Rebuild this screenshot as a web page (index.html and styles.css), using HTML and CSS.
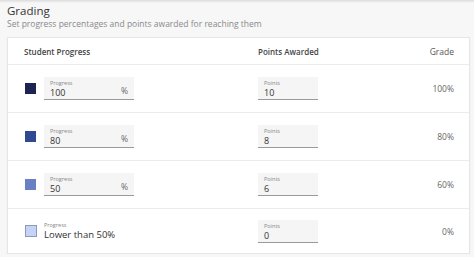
FILE: index.html
```html
<!DOCTYPE html>
<html lang="en">
<head>
    <meta charset="UTF-8">
    <meta name="viewport" content="width=device-width, initial-scale=1.0">
    <title>Grading</title>
    <link rel="stylesheet" href="styles.css">
</head>
<body>
    <div class="top-shade"></div>
    <div class="page">
        <h1>Grading</h1>
        <p class="subtitle">Set progress percentages and points awarded for reaching them</p>

        <div class="card">
            <div class="row head">
                <div>Student Progress</div>
                <div>Points Awarded</div>
                <div class="grade">Grade</div>
            </div>

            <div class="row">
                <div class="progress-cell">
                    <span class="swatch c1"></span>
                    <div class="field wide">
                        <span class="field-label">Progress</span>
                        <span class="field-value">100</span>
                        <span class="unit">%</span>
                    </div>
                </div>
                <div>
                    <div class="field narrow">
                        <span class="field-label">Points</span>
                        <span class="field-value">10</span>
                    </div>
                </div>
                <div class="grade">100%</div>
            </div>

            <div class="row">
                <div class="progress-cell">
                    <span class="swatch c2"></span>
                    <div class="field wide">
                        <span class="field-label">Progress</span>
                        <span class="field-value">80</span>
                        <span class="unit">%</span>
                    </div>
                </div>
                <div>
                    <div class="field narrow">
                        <span class="field-label">Points</span>
                        <span class="field-value">8</span>
                    </div>
                </div>
                <div class="grade">80%</div>
            </div>

            <div class="row">
                <div class="progress-cell">
                    <span class="swatch c3"></span>
                    <div class="field wide">
                        <span class="field-label">Progress</span>
                        <span class="field-value">50</span>
                        <span class="unit">%</span>
                    </div>
                </div>
                <div>
                    <div class="field narrow">
                        <span class="field-label">Points</span>
                        <span class="field-value">6</span>
                    </div>
                </div>
                <div class="grade">60%</div>
            </div>

            <div class="row last">
                <div class="progress-cell">
                    <span class="swatch c4"></span>
                    <div class="static">
                        <span class="field-label">Progress</span>
                        <span class="field-value">Lower than 50%</span>
                    </div>
                </div>
                <div>
                    <div class="field narrow">
                        <span class="field-label">Points</span>
                        <span class="field-value">0</span>
                    </div>
                </div>
                <div class="grade">0%</div>
            </div>
        </div>
    </div>
</body>
</html>
```

FILE: styles.css
```css
body {
    font-family: 'Open Sans', sans-serif;
    background-color: #f7f7f7;
    margin: 0;
    padding: 0;
    color: #333;
}

.top-shade {
    height: 3px;
    background: linear-gradient(#dcdcdc, #f7f7f7);
}

.page {
    padding: 0 4px 0 7px;
}

h1 {
    font-size: 11.5px;
    font-weight: 400;
    color: #333;
    margin: 0;
    line-height: 15px;
}

.subtitle {
    font-size: 8.5px;
    color: #8a8a8a;
    margin: 0;
    line-height: 11px;
}

.card {
    background: #fff;
    border: 1px solid #e6e6e6;
    margin-top: 8px;
    box-shadow: 0 1px 2px rgba(0, 0, 0, 0.05);
}

.row {
    display: grid;
    grid-template-columns: 234px 1fr auto;
    align-items: center;
    padding: 0 15px 0 16px;
    height: 47px;
    border-bottom: 1px solid #ececec;
    font-size: 8px;
    color: #555;
}

.row.head {
    height: 26px;
    font-weight: 600;
    color: #444;
    font-size: 8px;
}

.row.last {
    border-bottom: none;
    height: 44px;
}

.grade {
    text-align: right;
    font-size: 8.5px;
    color: #666;
}

.row.head .grade {
    font-weight: 400;
    color: #555;
    font-size: 8.5px;
}

.progress-cell {
    display: flex;
    align-items: center;
}

.swatch {
    width: 11px;
    height: 11px;
    margin: 0 8px 0 1px;
    box-sizing: border-box;
}

.c1 { background: #1c2452; }
.c2 { background: #30498f; }
.c3 { background: #6b7fc4; }
.c4 { background: #c6d3f8; border: 1px solid #8e99b6; width: 12px; height: 12px; }

.field {
    position: relative;
    background: #f5f5f5;
    border-bottom: 1px solid #9a9a9a;
    height: 23px;
    box-sizing: border-box;
    padding: 3px 6px 0 6px;
    display: flex;
    flex-direction: column;
}

.field.wide {
    width: 90px;
}

.field.narrow {
    width: 60px;
}

.static {
    display: flex;
    flex-direction: column;
    margin-left: -1px;
}

.field-label {
    font-size: 5.5px;
    color: #888;
    line-height: 7px;
}

.field-value {
    font-size: 9px;
    color: #333;
    line-height: 12px;
}

.static .field-value {
    font-size: 9.5px;
}

.unit {
    position: absolute;
    right: 6px;
    bottom: 2px;
    font-size: 8.5px;
    color: #666;
    line-height: 12px;
}
```
